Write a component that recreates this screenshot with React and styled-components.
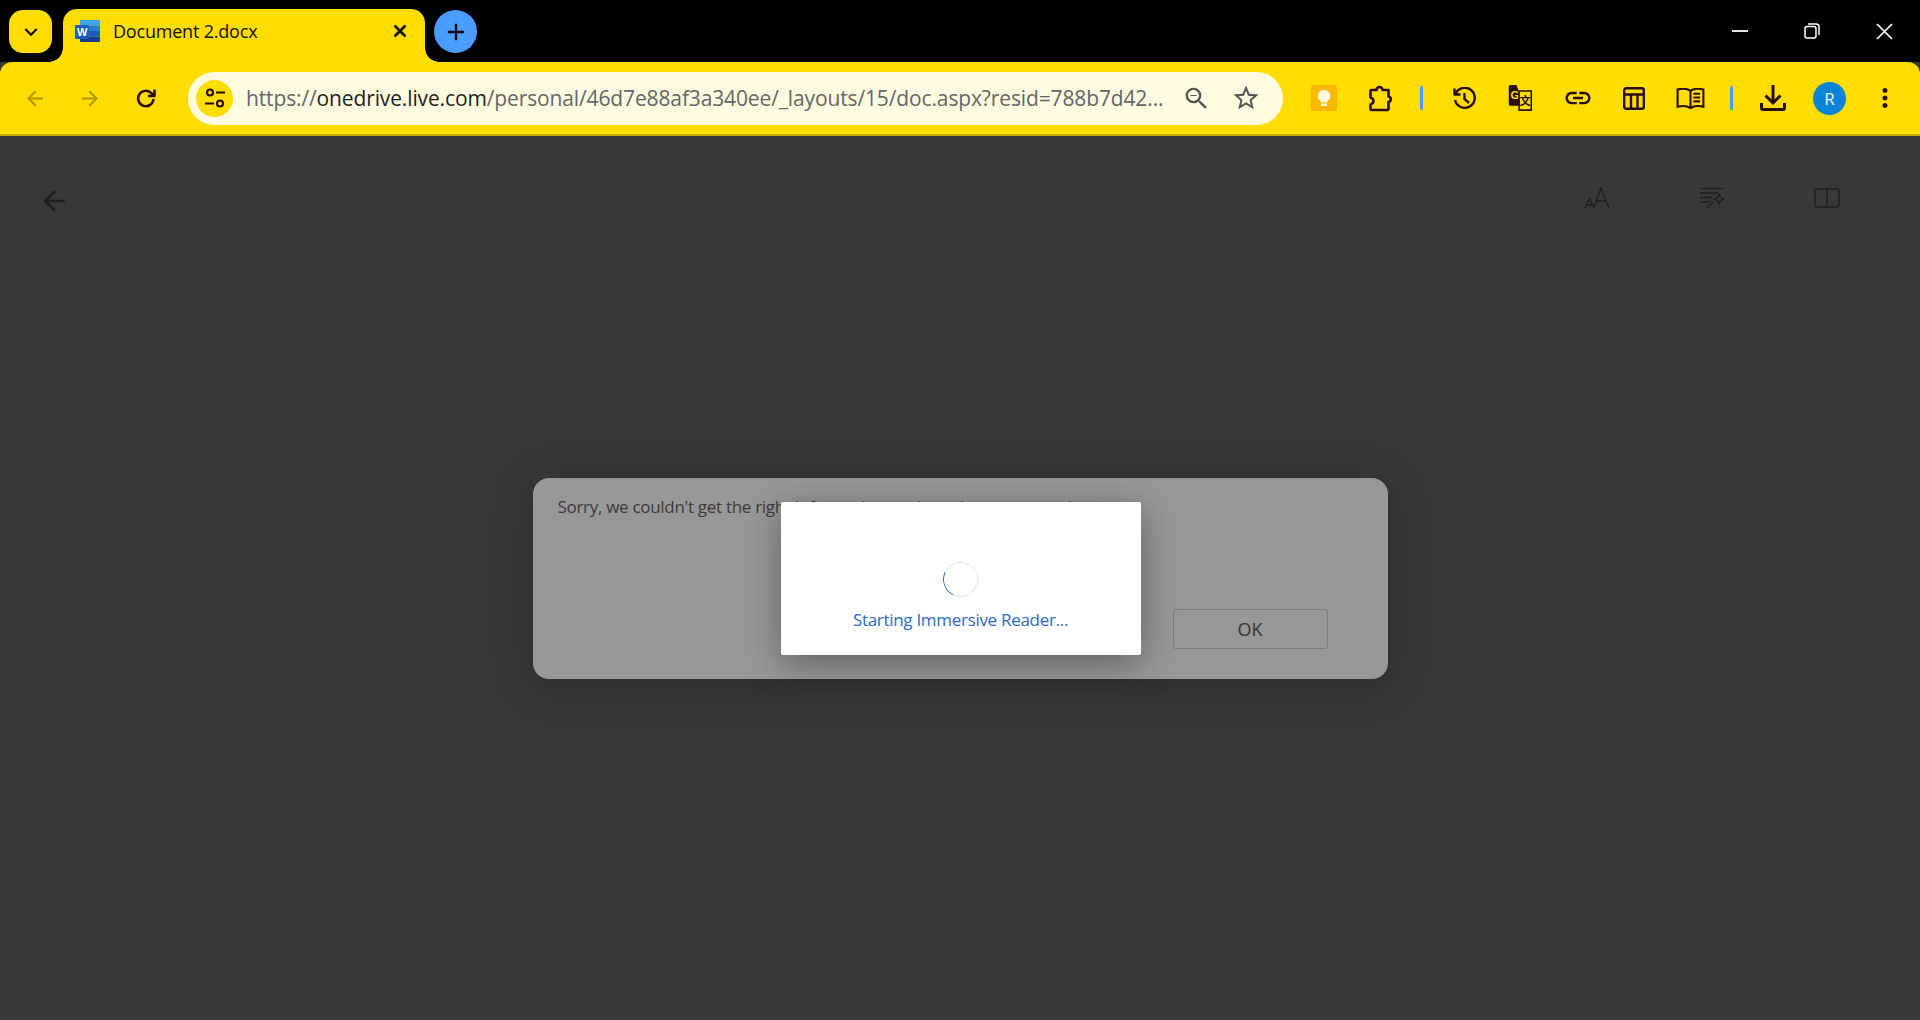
import React from "react";
import styled, { createGlobalStyle } from "styled-components";
import {
  MdArrowBack,
  MdArrowForward,
  MdZoomOut,
  MdStarBorder,
  MdLink,
  MdMoreVert,
  MdAdd,
  MdKeyboardArrowDown,
} from "react-icons/md";

const YELLOW = "#ffdd00";
const INK = "#260e14";

const GlobalStyle = createGlobalStyle`
  html, body {
    margin: 0;
    height: 100%;
    background: #383838;
    font-family: "Open Sans", "Liberation Sans", sans-serif;
  }
  #root { height: 100%; }
`;

const Page = styled.div`
  width: 1920px;
  height: 1020px;
  display: flex;
  flex-direction: column;
  overflow: hidden;
`;

const TabStrip = styled.div`
  height: 62px;
  flex: none;
  background: #000;
  display: flex;
  align-items: flex-start;
  padding: 10px 0 0 9px;
  box-sizing: border-box;
`;

const TabSearch = styled.div`
  width: 43px;
  height: 43px;
  border-radius: 14px;
  background: ${YELLOW};
  color: #111;
  display: flex;
  align-items: center;
  justify-content: center;
  font-size: 26px;
`;

const Tab = styled.div`
  position: relative;
  margin: -1px 0 0 11px;
  width: 362px;
  height: 53px;
  background: ${YELLOW};
  border-radius: 14px 14px 0 0;
  display: flex;
  align-items: center;
  padding: 0 18px 10px 12px;
  box-sizing: border-box;
  color: #111;
  font-size: 18px;
  letter-spacing: -0.2px;

  &::before,
  &::after {
    content: "";
    position: absolute;
    bottom: 0;
    width: 14px;
    height: 14px;
  }
  &::before {
    left: -14px;
    background: radial-gradient(circle at 0 0, transparent 13.5px, ${YELLOW} 14px);
  }
  &::after {
    right: -14px;
    background: radial-gradient(circle at 100% 0, transparent 13.5px, ${YELLOW} 14px);
  }
`;

const TabTitle = styled.span`
  flex: 1;
  margin-left: 13px;
`;

const NewTab = styled.div`
  margin-left: 9px;
  width: 43px;
  height: 43px;
  border-radius: 50%;
  background: #4a9cff;
  color: #0a0a0a;
  display: flex;
  align-items: center;
  justify-content: center;
  font-size: 28px;
`;

const WindowControls = styled.div`
  margin-left: auto;
  display: flex;
  align-items: center;
  height: 42px;
  padding-right: 27px;
  gap: 56px;
`;

const Toolbar = styled.div`
  position: relative;
  height: 74px;
  flex: none;
  box-sizing: border-box;
  background: ${YELLOW};
  border-radius: 12px 12px 0 0;
  border-bottom: 2px solid #c9ae00;
  display: flex;
  align-items: center;
  color: ${INK};
`;

const NavButton = styled.div`
  width: 24px;
  display: flex;
  justify-content: center;
  margin-left: ${(p) => p.$ml}px;
  font-size: 29px;
  color: ${(p) => (p.$off ? "#af9500" : INK)};
`;

const Omnibox = styled.div`
  margin-left: 30px;
  width: 1095px;
  height: 53px;
  flex: none;
  box-sizing: border-box;
  border-radius: 27px;
  background: #fffbe0;
  display: flex;
  align-items: center;
  padding: 0 22px 0 8px;
`;

const TuneBadge = styled.div`
  width: 37px;
  height: 37px;
  flex: none;
  border-radius: 50%;
  background: ${YELLOW};
  display: flex;
  align-items: center;
  justify-content: center;
`;

const Url = styled.div`
  margin-left: 13px;
  flex: 1;
  font-size: 21px;
  letter-spacing: -0.13px;
  color: #666;
  white-space: nowrap;
  overflow: hidden;
`;

const UrlHost = styled.span`
  color: #1f1f1f;
`;

const OmniIcon = styled.div`
  display: flex;
  color: #555;
  font-size: ${(p) => p.$size}px;
  margin-left: ${(p) => p.$ml}px;
`;

const ToolIcon = styled.div`
  width: 30px;
  height: 30px;
  flex: none;
  display: flex;
  align-items: center;
  justify-content: center;
  margin-left: ${(p) => p.$ml}px;
  font-size: ${(p) => p.$size || 30}px;
  color: ${INK};
`;

const Divider = styled.div`
  width: 3px;
  height: 24px;
  flex: none;
  border-radius: 2px;
  background: #4a9cff;
  margin-left: ${(p) => p.$ml}px;
`;

const Avatar = styled.div`
  width: 33px;
  height: 33px;
  flex: none;
  border-radius: 50%;
  background: #0a84d6;
  color: #e8f4ff;
  font-size: 17px;
  display: flex;
  align-items: center;
  justify-content: center;
  margin-left: 25px;
`;

const Reader = styled.main`
  position: relative;
  flex: 1;
`;

const ReaderBar = styled.div`
  display: flex;
  align-items: center;
  padding: 47px 77px 0 38px;
  color: #1e1e1e;
`;

const ReaderIcon = styled.div`
  display: flex;
  margin-left: ${(p) => p.$ml || 0}px;
  margin-top: ${(p) => p.$mt || 0}px;
  font-size: 32px;
`;

const Center = styled.div`
  position: absolute;
  inset: 0;
  display: flex;
  align-items: center;
  justify-content: center;
`;

const ErrorDialog = styled.div`
  width: 855px;
  height: 201px;
  box-sizing: border-box;
  padding: 17px 60px 30px 25px;
  border-radius: 16px;
  background: #989898;
  box-shadow: 0 6px 40px rgba(0, 0, 0, 0.22);
  display: flex;
  flex-direction: column;
  justify-content: space-between;
`;

const ErrorText = styled.div`
  font-size: 17px;
  letter-spacing: -0.3px;
  color: #3c3c3c;
`;

const OkButton = styled.div`
  align-self: flex-end;
  width: 155px;
  height: 40px;
  box-sizing: border-box;
  border: 1px solid #7d7d7d;
  border-radius: 3px;
  color: #333;
  font-size: 18px;
  display: flex;
  align-items: center;
  justify-content: center;
`;

const LoaderCard = styled.div`
  margin-left: 1px;
  width: 360px;
  height: 153px;
  background: #fff;
  border-radius: 2px;
  box-shadow: 0 8px 36px rgba(0, 0, 0, 0.38);
  display: flex;
  flex-direction: column;
  align-items: center;
  padding-top: 60px;
  box-sizing: border-box;
`;

const Spinner = styled.div`
  width: 35px;
  height: 35px;
  box-sizing: border-box;
  border-radius: 50%;
  border: 1.5px solid #dbe7f7;
  border-left-color: #2b6cc4;
  transform: rotate(-20deg);
`;

const LoaderText = styled.div`
  margin-top: 11px;
  font-size: 17px;
  letter-spacing: -0.3px;
  color: #2b6cc4;
`;

const WordLogo = () => (
  <svg width="25" height="22" viewBox="0 0 25 22">
    <rect x="5" y="0" width="20" height="5.5" rx="1" fill="#41a5ee" />
    <rect x="5" y="5.5" width="20" height="5.5" fill="#2b7cd3" />
    <rect x="5" y="11" width="20" height="5.5" fill="#185abd" />
    <rect x="5" y="16.5" width="20" height="5.5" rx="1" fill="#103f91" />
    <rect x="0" y="5" width="14" height="14" rx="1" fill="#1a5fc0" />
    <text x="7" y="16" textAnchor="middle" fontSize="11" fontWeight="700" fill="#fff" fontFamily="Liberation Sans">W</text>
  </svg>
);

const TabCloseIcon = () => (
  <svg width="14" height="14" viewBox="0 0 14 14" stroke="#111" strokeWidth="2.6">
    <path d="M1.500 1.500l11 11M12.500 1.500l-11 11" />
  </svg>
);

const RefreshIcon = () => (
  <svg width="24" height="24" viewBox="0 0 24 24" fill="none" stroke={INK} strokeWidth="2.500">
    <path d="M19.500 13a7.700 7.700 0 1 1-2.300-6L20 9.500" />
    <path d="M20.500 3.500v6.500H14" strokeLinejoin="round" />
  </svg>
);

const TuneIcon = () => (
  <svg width="24" height="24" viewBox="0 0 24 24" fill="none" stroke={INK} strokeWidth="2.2">
    <circle cx="7" cy="6.5" r="3" />
    <path d="M13 6.5h9M2 17.5h9" />
    <circle cx="17" cy="17.5" r="3" />
  </svg>
);

const KeepIcon = () => (
  <svg width="26" height="26" viewBox="0 0 26 26">
    <rect width="26" height="26" rx="3" fill="#f9b800" />
    <path d="M13 5a6 6 0 0 1 3.5 11v1.5h-7V16A6 6 0 0 1 13 5z" fill="#fff8e1" />
    <rect x="10" y="18.5" width="6" height="2.5" fill="#fff8e1" />
  </svg>
);

const PuzzleIcon = () => (
  <svg width="27" height="28" viewBox="0 0 26 28" fill="none" stroke={INK} strokeWidth="2.6" strokeLinejoin="round">
    <path d="M4 6h5a3 3 0 0 1 3-3 3 3 0 0 1 3 3h6v6.500a2.800 2.800 0 0 1 0 5.500V25a1 1 0 0 1-1 1H4a1 1 0 0 1-1-1v-4.500a4 4 0 0 0 3-3.500 4 4 0 0 0-3-3.500V7a1 1 0 0 1 1-1z" />
  </svg>
);

const HistoryIcon = () => (
  <svg width="24" height="23" viewBox="0 0 24 23" fill="none" stroke={INK} strokeWidth="2.400">
    <path d="M3.500 7A10 10 0 1 1 3 13" />
    <path d="M2.500 1.500V7.500H8.500" strokeLinejoin="round" />
    <path d="M12.500 6v6l4.500 4" />
  </svg>
);

const TranslateIcon = () => (
  <svg width="26" height="26" viewBox="0 0 28 30">
    <path d="M1 2a2 2 0 0 1 2-2h7l8 24H3a2 2 0 0 1-2-2z" fill={INK} />
    <text x="8" y="16" textAnchor="middle" fontSize="13" fontWeight="700" fill={YELLOW} fontFamily="Liberation Sans">G</text>
    <path d="M13 7h14v22H13z" fill={YELLOW} stroke={INK} strokeWidth="1.800" />
    <text x="20" y="23" textAnchor="middle" fontSize="13" fontWeight="700" fill={INK} fontFamily="Noto Sans CJK SC, sans-serif">文</text>
  </svg>
);

const TableIcon = () => (
  <svg width="22" height="23" viewBox="0 0 22 23" fill="none" stroke={INK} strokeWidth="2.400">
    <rect x="1.200" y="1.200" width="19.600" height="20.600" rx="2" />
    <path d="M1.200 7.500h19.600M8 7.500v14.300M14.500 7.500v14.300" />
  </svg>
);

const BookIcon = () => (
  <svg width="29" height="21" viewBox="0 0 30 22" fill="none" stroke={INK} strokeWidth="2.200">
    <path d="M15 3C12 .8 6 .5 1.500 1.500v18c4.500-1 10.500-.7 13.500 1.500 3-2.200 9-2.500 13.500-1.500v-18C24 .5 18 .8 15 3zM15 3v18" />
    <path d="M18 6h7M18 10h7M18 14h7" />
  </svg>
);

const DownloadIcon = () => (
  <svg width="26" height="26" viewBox="0 0 26 26" fill="none" stroke={INK} strokeWidth="3">
    <path d="M13 0v17" />
    <path d="M5.500 10.500L13 18l7.500-7.500" />
    <path d="M1.500 18v5a1.500 1.500 0 0 0 1.500 1.500h20a1.500 1.500 0 0 0 1.500-1.500v-5" />
  </svg>
);

const MinimizeIcon = () => (
  <svg width="16" height="16" viewBox="0 0 16 16" stroke="#fff" strokeWidth="1.800">
    <path d="M0 8h16" />
  </svg>
);

const RestoreIcon = () => (
  <svg width="16" height="16" viewBox="0 0 16 16" fill="none" stroke="#fff" strokeWidth="1.500">
    <rect x="1" y="3.500" width="11" height="11.500" rx="2" />
    <path d="M4 1h8a3 3 0 0 1 3 3v8" />
  </svg>
);

const CloseIcon = () => (
  <svg width="17" height="17" viewBox="0 0 17 17" stroke="#fff" strokeWidth="1.700">
    <path d="M1 1l15 15M16 1L1 16" />
  </svg>
);

const TextSizeIcon = () => (
  <svg width="26" height="22" viewBox="0 0 26 22" fill="none" stroke="#1e1e1e" strokeWidth="1.300">
    <path d="M1 21l4.500-9 4.500 9M2.500 18h6M10 21L17 1l8 20M12.500 14h9" />
  </svg>
);

const GrammarIcon = () => (
  <svg width="26" height="22" viewBox="0 0 26 22" fill="none" stroke="#1e1e1e" strokeWidth="1.300">
    <path d="M1 1.500h24M1 6h18M1 10.500h12M1 15h10M8 21l6-6" />
    <path d="M20 7l1.500 3.500L25 12l-3.500 1.500L20 17l-1.500-3.500L15 12l3.500-1.500z" />
  </svg>
);

const SplitIcon = () => (
  <svg width="26" height="20" viewBox="0 0 26 20" fill="none" stroke="#1e1e1e" strokeWidth="1.400">
    <rect x="1" y="1" width="24" height="18" rx="2" />
    <path d="M13 1v18" />
  </svg>
);

export default function App() {
  return (
    <Page>
      <GlobalStyle />
      <TabStrip>
        <TabSearch>
          <MdKeyboardArrowDown />
        </TabSearch>
        <Tab>
          <WordLogo />
          <TabTitle>Document 2.docx</TabTitle>
          <TabCloseIcon />
        </Tab>
        <NewTab>
          <MdAdd />
        </NewTab>
        <WindowControls>
          <MinimizeIcon />
          <RestoreIcon />
          <CloseIcon />
        </WindowControls>
      </TabStrip>
      <Toolbar>
        <NavButton $ml={23} $off>
          <MdArrowBack />
        </NavButton>
        <NavButton $ml={31} $off>
          <MdArrowForward />
        </NavButton>
        <NavButton $ml={32}>
          <RefreshIcon />
        </NavButton>
        <Omnibox>
          <TuneBadge>
            <TuneIcon />
          </TuneBadge>
          <Url>
            https://<UrlHost>onedrive.live.com</UrlHost>
            /personal/46d7e88af3a340ee/_layouts/15/doc.aspx?resid=788b7d42...
          </Url>
          <OmniIcon $size={29} $ml={14}>
            <MdZoomOut />
          </OmniIcon>
          <OmniIcon $size={30} $ml={20}>
            <MdStarBorder />
          </OmniIcon>
        </Omnibox>
        <ToolIcon $ml={26}>
          <KeepIcon />
        </ToolIcon>
        <ToolIcon $ml={26}>
          <PuzzleIcon />
        </ToolIcon>
        <Divider $ml={25} />
        <ToolIcon $ml={26}>
          <HistoryIcon />
        </ToolIcon>
        <ToolIcon $ml={26}>
          <TranslateIcon />
        </ToolIcon>
        <ToolIcon $ml={28} $size={30}>
          <MdLink />
        </ToolIcon>
        <ToolIcon $ml={26}>
          <TableIcon />
        </ToolIcon>
        <ToolIcon $ml={26}>
          <BookIcon />
        </ToolIcon>
        <Divider $ml={25} />
        <ToolIcon $ml={25}>
          <DownloadIcon />
        </ToolIcon>
        <Avatar>R</Avatar>
        <ToolIcon $ml={24} $size={32}>
          <MdMoreVert />
        </ToolIcon>
      </Toolbar>
      <Reader>
        <ReaderBar>
          <ReaderIcon $mt={2}>
            <MdArrowBack />
          </ReaderIcon>
          <ReaderIcon $ml={1514} $mt={-5}>
            <TextSizeIcon />
          </ReaderIcon>
          <ReaderIcon $ml={89} $mt={-5}>
            <GrammarIcon />
          </ReaderIcon>
          <ReaderIcon $ml={89} $mt={-5}>
            <SplitIcon />
          </ReaderIcon>
        </ReaderBar>
        <Center>
          <ErrorDialog>
            <ErrorText>Sorry, we couldn't get the right information to show the text or math.</ErrorText>
            <OkButton>OK</OkButton>
          </ErrorDialog>
        </Center>
        <Center>
          <LoaderCard>
            <Spinner />
            <LoaderText>Starting Immersive Reader...</LoaderText>
          </LoaderCard>
        </Center>
      </Reader>
    </Page>
  );
}
